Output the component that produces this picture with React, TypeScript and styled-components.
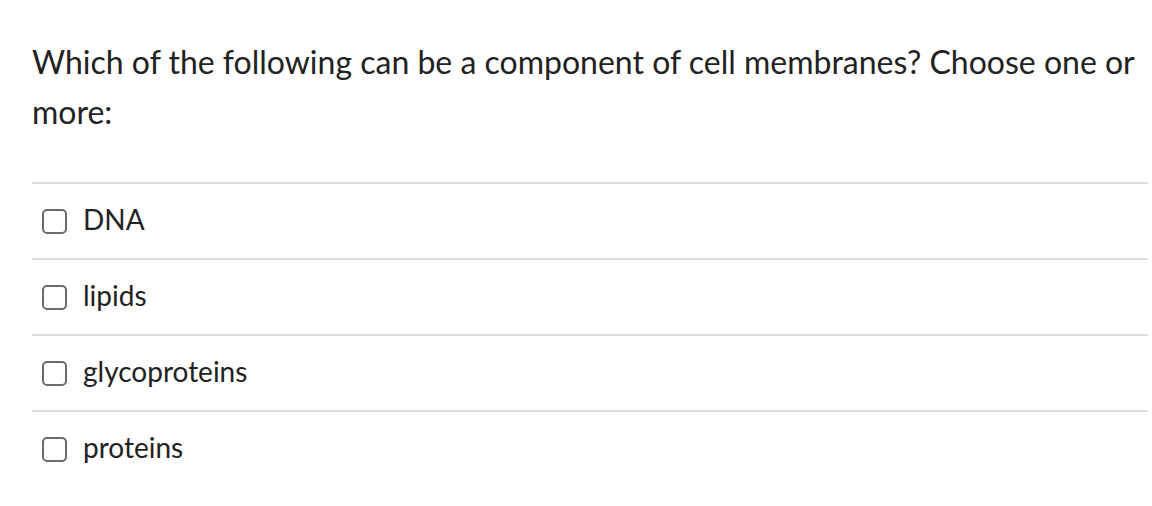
import styled, { createGlobalStyle } from 'styled-components';

const GlobalStyle = createGlobalStyle`
    html, body {
        margin: 0;
        padding: 0;
        background: #fff;
    }
    body {
        font-family: Lato, "Liberation Sans", sans-serif;
        color: #222;
    }
`;

const QuestionWrap = styled.div`
    padding: 37px 4px 0 32px;
`;

const Prompt = styled.p`
    margin: 0 0 45px 0;
    font-size: 32px;
    line-height: 50px;
    color: #222;
`;

const OptionList = styled.ul`
    list-style: none;
    margin: 0;
    padding: 0;
`;

const OptionRow = styled.li`
    display: flex;
    align-items: center;
    gap: 16px;
    height: 74px;
    padding-left: 10px;
    border-top: 2px solid #dcdcdc;
`;

const Box = styled.span`
    box-sizing: border-box;
    flex: none;
    width: 25px;
    height: 25px;
    border: 2px solid #6b6b6b;
    border-radius: 5px;
    background: #fff;
`;

const OptionLabel = styled.label`
    font-size: 28px;
    color: #222;
    line-height: 1;
    margin-top: -4px;
`;

const options = ['DNA', 'lipids', 'glycoproteins', 'proteins'];

const App = () => {
    return (
        <>
            <GlobalStyle />
            <QuestionWrap>
                <Prompt>Which of the following can be a component of cell membranes? Choose one or more:</Prompt>
                <OptionList>
                    {options.map((opt) => (
                        <OptionRow key={opt}>
                            <Box />
                            <OptionLabel>{opt}</OptionLabel>
                        </OptionRow>
                    ))}
                </OptionList>
            </QuestionWrap>
        </>
    );
};

export default App;
